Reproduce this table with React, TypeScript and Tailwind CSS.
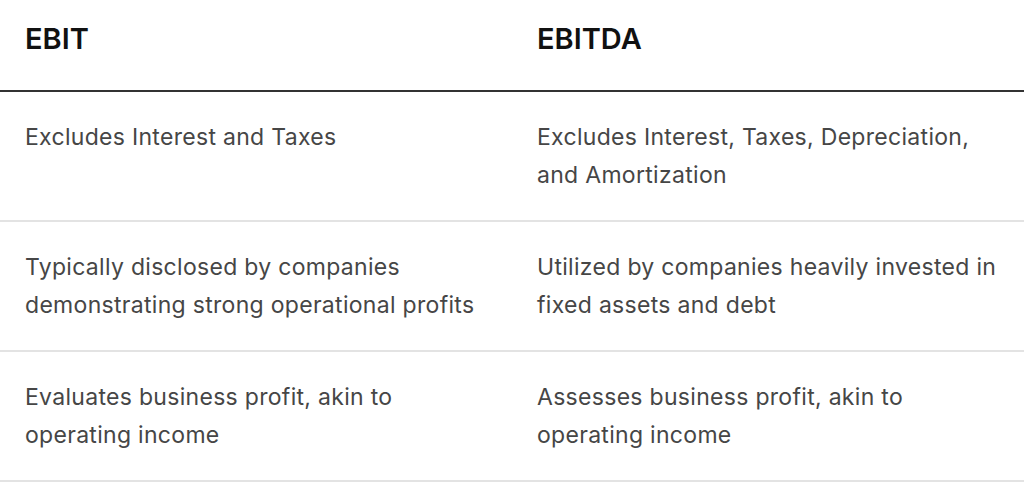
const rows = [
  ["Excludes Interest and Taxes", "Excludes Interest, Taxes, Depreciation, and Amortization"],
  ["Typically disclosed by companies demonstrating strong operational profits", "Utilized by companies heavily invested in fixed assets and debt"],
  ["Evaluates business profit, akin to operating income", "Assesses business profit, akin to operating income"],
];

export default function App() {
  return (
    <div className="w-[1024px] h-[485px] bg-white overflow-hidden" style={{ fontFamily: "Inter, 'Liberation Sans', sans-serif" }}>
      <div className="grid grid-cols-2 h-[92px] border-b-2 border-[#333333]">
        <div className="pl-[25px] pr-6 pt-[22px] text-[29px] leading-[1.2] font-semibold text-[#111111]">EBIT</div>
        <div className="pl-[25px] pr-6 pt-[22px] text-[29px] leading-[1.2] font-semibold text-[#111111]">EBITDA</div>
      </div>
      {rows.map((r, i) => (
        <div key={i} className="grid grid-cols-2 h-[130px] border-b-2 border-[#e3e3e3]">
          <div className="pl-[25px] pr-6 pt-[27px] text-[23px] leading-[37.5px] tracking-[0.3px] text-[#464646]">{r[0]}</div>
          <div className="pl-[25px] pr-6 pt-[27px] text-[23px] leading-[37.5px] tracking-[0.3px] text-[#464646]">{r[1]}</div>
        </div>
      ))}
    </div>
  );
}
